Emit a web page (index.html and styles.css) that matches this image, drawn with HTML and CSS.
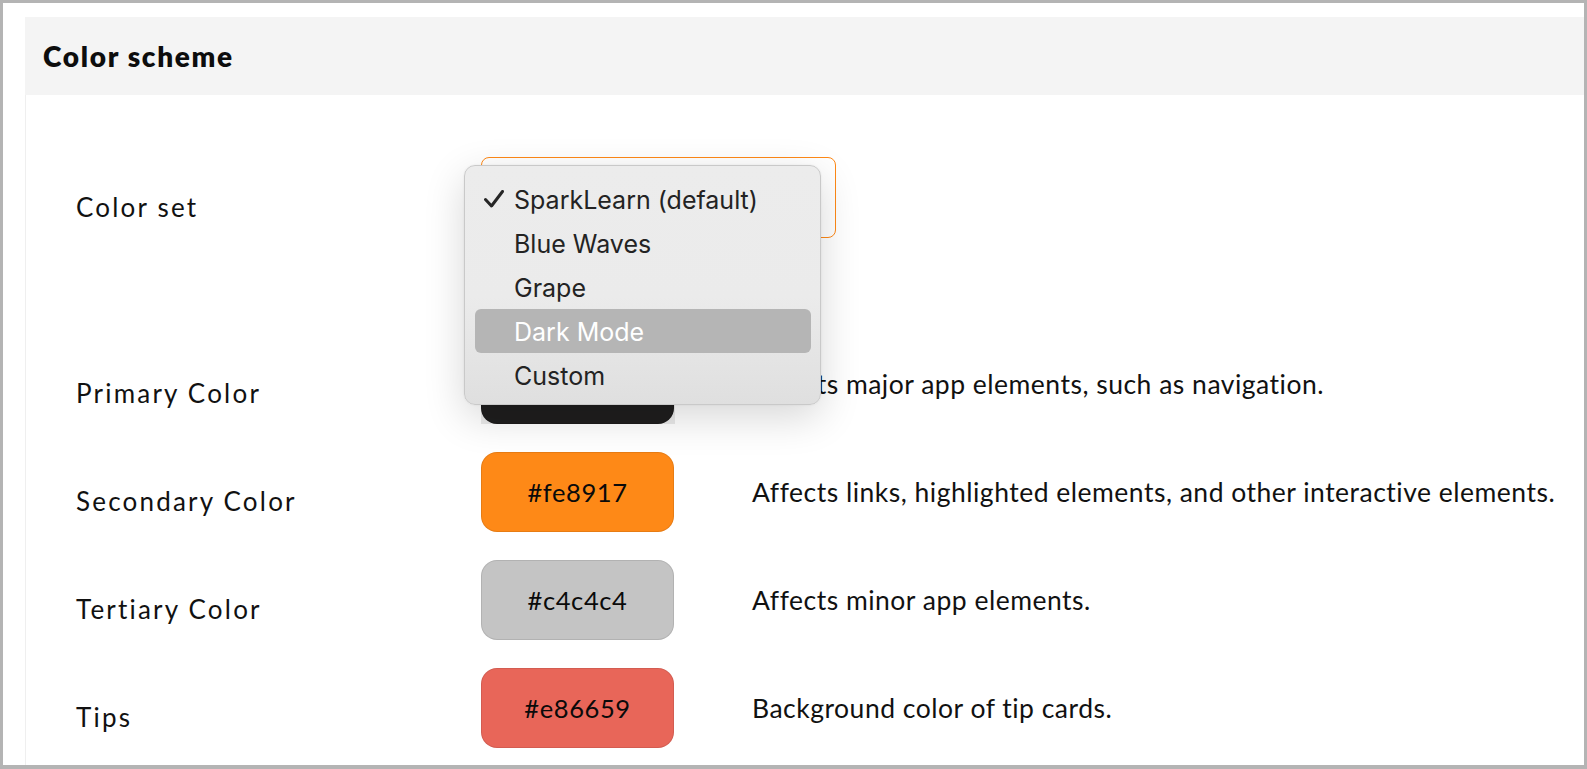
FILE: index.html
```html
<!DOCTYPE html>
<html lang="en">
<head>
<meta charset="utf-8">
<title>Color scheme</title>
<link rel="stylesheet" href="styles.css">
</head>
<body>
<div class="frame">
  <section class="panel">
    <header class="panel-head">
      <h2 class="panel-title">Color scheme</h2>
    </header>
    <div class="panel-body">
      <div class="row row-set">
        <div class="label">Color set</div>
        <div class="control">
          <div class="select">
            <div class="menu">
              <div class="menu-item checked">
                <svg class="check" viewBox="0 0 20 18" width="20" height="18"><path d="M1.5 9.5 L7.5 16 L18.5 1.5" fill="none" stroke="#262626" stroke-width="3" stroke-linecap="round" stroke-linejoin="round"/></svg>
                <span>SparkLearn (default)</span>
              </div>
              <div class="menu-item"><span>Blue Waves</span></div>
              <div class="menu-item"><span>Grape</span></div>
              <div class="menu-item active"><span>Dark Mode</span></div>
              <div class="menu-item"><span>Custom</span></div>
            </div>
          </div>
        </div>
        <div class="desc"></div>
      </div>
      <div class="row">
        <div class="label">Primary Color</div>
        <div class="control"><div class="swatch-well"><div class="swatch swatch-primary">#222020</div></div></div>
        <div class="desc">Affects major app elements, such as navigation.</div>
      </div>
      <div class="row">
        <div class="label">Secondary Color</div>
        <div class="control"><div class="swatch swatch-secondary">#fe8917</div></div>
        <div class="desc">Affects links, highlighted elements, and other interactive elements.</div>
      </div>
      <div class="row">
        <div class="label">Tertiary Color</div>
        <div class="control"><div class="swatch swatch-tertiary">#c4c4c4</div></div>
        <div class="desc">Affects minor app elements.</div>
      </div>
      <div class="row">
        <div class="label">Tips</div>
        <div class="control"><div class="swatch swatch-tips">#e86659</div></div>
        <div class="desc">Background color of tip cards.</div>
      </div>
    </div>
  </section>
</div>
</body>
</html>
```

FILE: styles.css
```css
* { box-sizing: border-box; }
html, body { margin: 0; padding: 0; }
body {
  background: #ffffff;
  font-family: Lato, "Liberation Sans", sans-serif;
  color: #111111;
  overflow: hidden;
}
.frame {
  width: 1587px;
  height: 769px;
  border: 3px solid #b4b4b4;
  border-bottom-width: 4px;
  padding: 14px 0 0 22px;
  overflow: hidden;
  background: #ffffff;
}
.panel {
  border-left: 1px solid #efefef;
  height: 100%;
}
.panel-head {
  background: #f4f4f4;
  height: 78px;
  display: flex;
  align-items: center;
  padding-left: 18px;
  margin-left: -1px;
}
.panel-title {
  margin: 0;
  font-size: 28px;
  font-weight: 800;
  letter-spacing: 1.7px;
  color: #0d0d0d;
  padding-top: 0;
}
.panel-body {
  padding: 62px 0 0 50px;
  display: flex;
  flex-direction: column;
  gap: 28px;
}
.row {
  display: flex;
  align-items: center;
  height: 80px;
}
.row-set {
  height: 81px;
  margin-bottom: 78px;
}
.label {
  width: 405px;
  flex: none;
  font-size: 26px;
  letter-spacing: 2.2px;
  padding-top: 18px;
}
.control {
  width: 271px;
  flex: none;
  height: 100%;
}
.desc {
  font-size: 26.5px;
  letter-spacing: 0.5px;
  white-space: nowrap;
}
.select {
  position: relative;
  width: 355px;
  height: 81px;
  border: 1px solid #fe8917;
  border-radius: 8px;
  background: #ffffff;
}
.menu {
  position: absolute;
  left: -18px;
  top: 7px;
  width: 357px;
  height: 240px;
  background: linear-gradient(to bottom, #ececec 0%, #ebebeb 55%, #dfdfdf 100%);
  border: 1px solid #c9c9c9;
  border-radius: 11px;
  box-shadow: 0 12px 40px rgba(0, 0, 0, 0.16), 0 0 2px rgba(0, 0, 0, 0.08);
  padding: 11px 9px 7px 10px;
  font-family: Inter, "Liberation Sans", sans-serif;
  z-index: 5;
}
.menu-item {
  position: relative;
  height: 44px;
  display: flex;
  align-items: center;
  padding-left: 39px;
  border-radius: 6px;
  font-size: 25px;
  color: #232323;
}
.menu-item span { padding-top: 1px; }
.menu-item.active {
  background: #b5b5b5;
  color: #ffffff;
}
.check {
  position: absolute;
  left: 9px;
  top: 13px;
}
.swatch-well {
  width: 194px;
  height: 80px;
  background: #e9e9e9;
}
.swatch {
  width: 193px;
  height: 80px;
  border-radius: 16px;
  border: 1px solid rgba(0, 0, 0, 0.09);
  display: flex;
  align-items: center;
  justify-content: center;
  font-size: 25.5px;
  letter-spacing: 0.6px;
  color: #0a0a0a;
}
.swatch-primary { background: #1f1e1e; color: #ffffff; }
.swatch-secondary { background: #fe8917; }
.swatch-tertiary { background: #c4c4c4; }
.swatch-tips { background: #e86659; }
```
